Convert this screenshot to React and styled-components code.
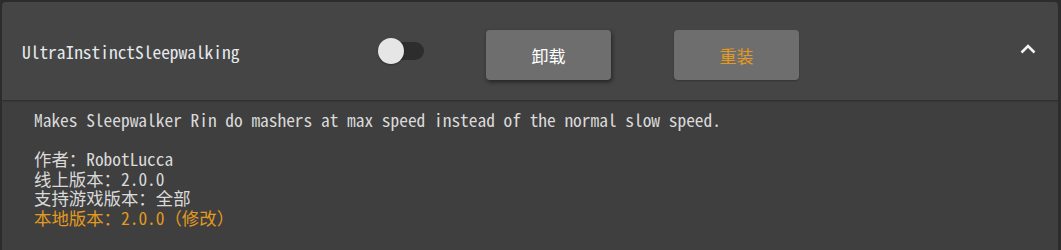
import styled, { createGlobalStyle } from "styled-components";

const GlobalStyle = createGlobalStyle`
    body {
        margin: 0;
        background: #2c2c2c;
        font-family: "Noto Sans Mono CJK SC", "Liberation Mono", "Noto Sans CJK SC", monospace;
    }
`;

const info = [
    { label: "作者", value: "RobotLucca" },
    { label: "线上版本", value: "2.0.0" },
    { label: "支持游戏版本", value: "全部" },
    { label: "本地版本", value: "2.0.0（修改）", accent: true },
];

export default function App(){
    return(
        <>
        <GlobalStyle/>
        <PAGE>
            <CARD>
                <HEADER>
                    <TITLE>UltraInstinctSleepwalking</TITLE>
                    <SWITCH>
                        <TRACK/>
                        <THUMB/>
                    </SWITCH>
                    <BUTTON $raised>卸载</BUTTON>
                    <BUTTON $accent>重装</BUTTON>
                    <CHEVRON>
                        <svg width="16" height="10" viewBox="0 0 16 10">
                            <polyline points="1.5,8.5 8,2 14.5,8.5" fill="none" stroke="#f2f2f2" strokeWidth="2.6"/>
                        </svg>
                    </CHEVRON>
                </HEADER>
                <BODY>
                    <LINE>Makes Sleepwalker Rin do mashers at max speed instead of the normal slow speed.</LINE>
                    <LINE>&nbsp;</LINE>
                    {info.map((item,index)=>{
                        return <LINE key={index} $accent={item.accent}>{item.label}：{item.value}</LINE>
                    })}
                </BODY>
            </CARD>
        </PAGE>
        </>
    );
}
const PAGE = styled.div`
    padding: 2px 3px 0 2px;
    height: 250px;
    box-sizing: border-box;
    overflow: hidden;
`;
const CARD = styled.div`
    background: #3f3f3f;
    border-radius: 4px 4px 0 0;
    height: 100%;
    overflow: hidden;
`;
const HEADER = styled.div`
    display: flex;
    align-items: center;
    height: 98px;
    padding: 0 22px 0 20px;
    background: #454545;
    box-shadow: 0 1px 2px rgba(0,0,0,0.35);
    position: relative;
`;
const TITLE = styled.div`
    flex: 0 0 356px;
    font-size: 17.4px;
    color: #e6eaee;
`;
const SWITCH = styled.div`
    position: relative;
    flex: 0 0 46px;
    height: 26px;
    display: flex;
    align-items: center;
`;
const TRACK = styled.div`
    margin-left: 3px;
    width: 43px;
    height: 18px;
    border-radius: 9px;
    background: #2d2d2d;
`;
const THUMB = styled.div`
    position: absolute;
    left: 0;
    top: 0;
    width: 26px;
    height: 26px;
    border-radius: 50%;
    background: #e6e6e6;
    box-shadow: 0 1px 2px rgba(0,0,0,0.3);
`;
const BUTTON = styled.div`
    flex: 0 0 125px;
    height: 50px;
    margin: 8px 0 0 ${({$accent})=>$accent?"63px":"62px"};
    display: flex;
    align-items: center;
    justify-content: center;
    border-radius: 4px;
    background: #6e6e6e;
    font-size: 17px;
    color: ${({$accent})=>$accent?"#e39a1e":"#ffffff"};
    box-shadow: ${({$raised})=>$raised?"1px 2px 4px rgba(0,0,0,0.5)":"0 1px 2px rgba(0,0,0,0.25)"};
`;
const CHEVRON = styled.div`
    margin-left: auto;
    display: flex;
    margin-top: -4px;
`;
const BODY = styled.div`
    padding: 10px 0 0 32px;
`;
const LINE = styled.div`
    font-size: 17.4px;
    line-height: 19.5px;
    white-space: pre;
    color: ${({$accent})=>$accent?"#e39a1e":"#dadada"};
`;
